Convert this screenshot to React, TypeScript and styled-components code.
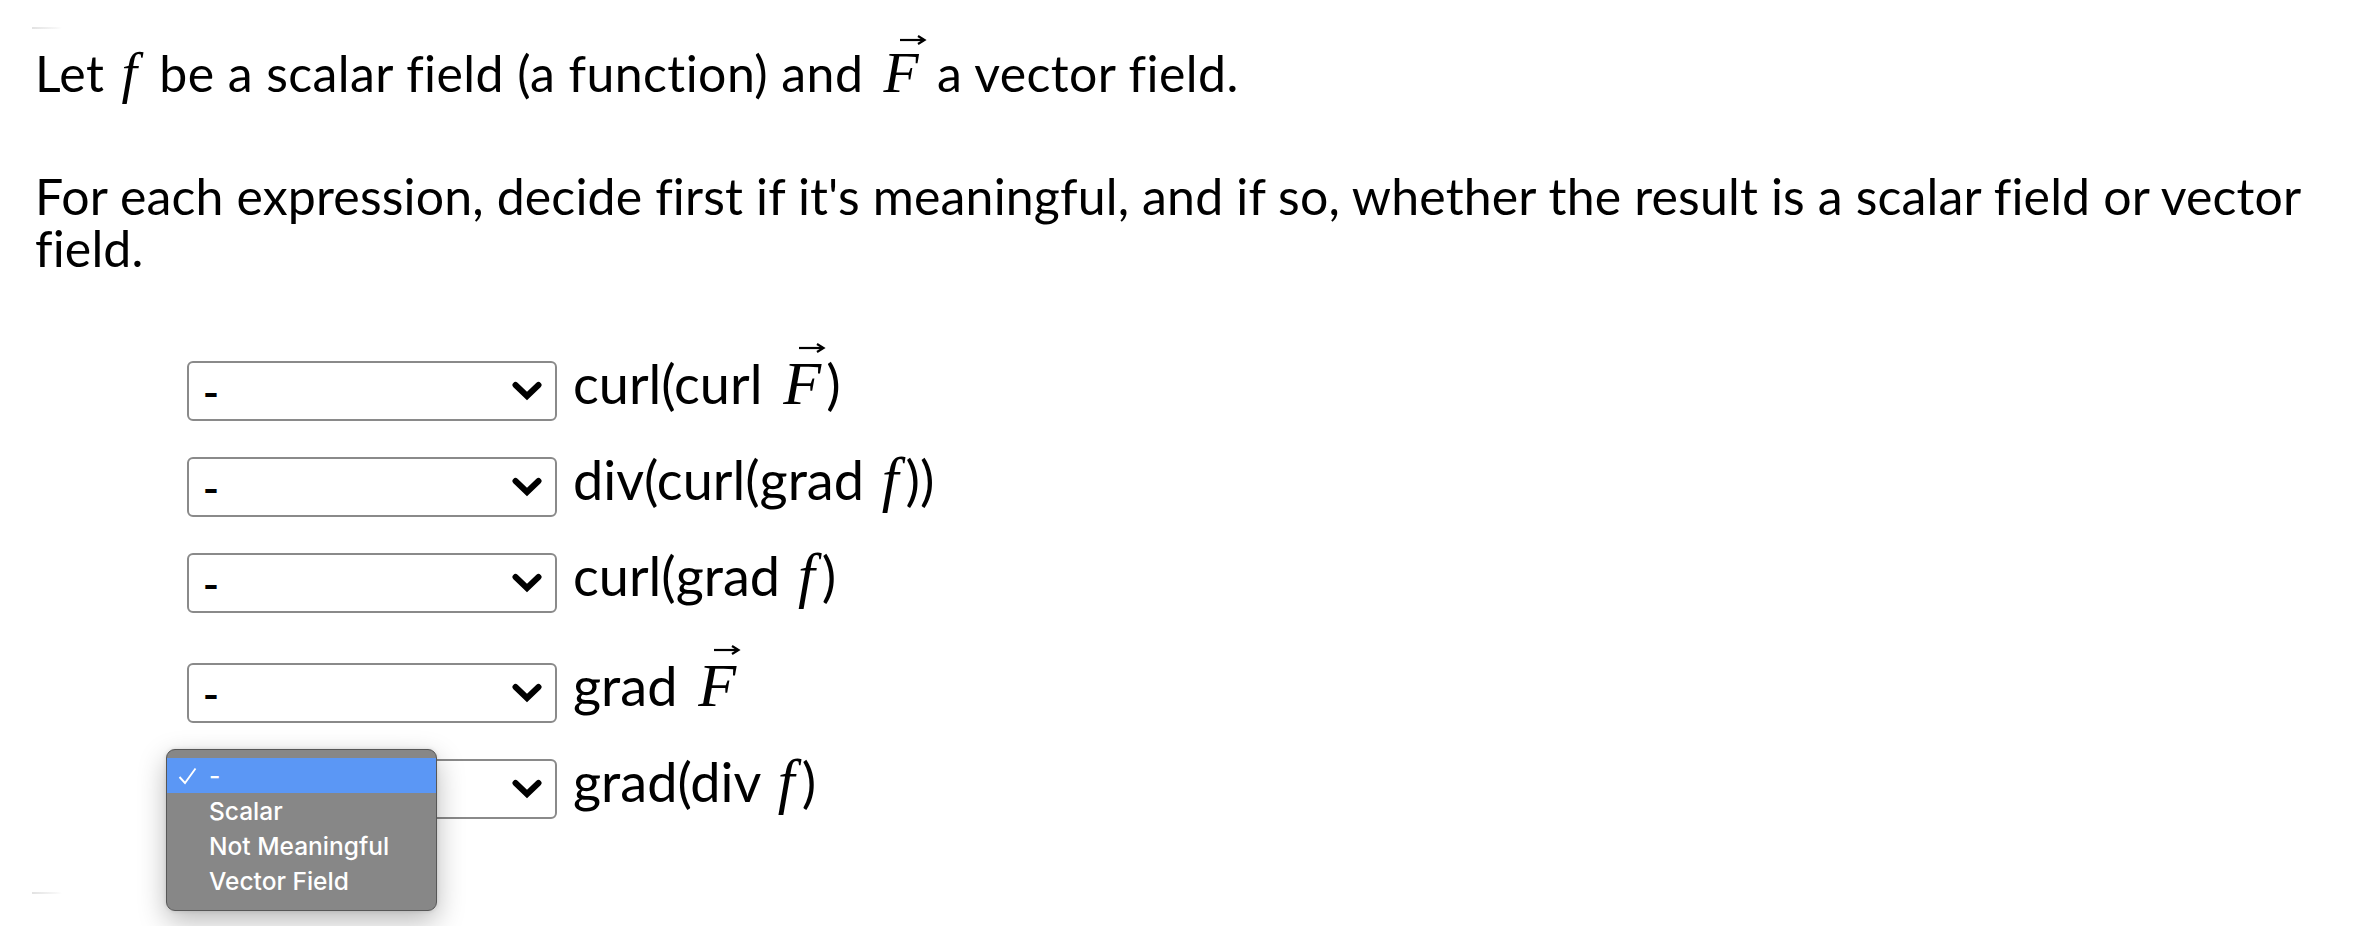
import React from 'react';
import styled, { createGlobalStyle } from 'styled-components';

const TEXT_FONT = `Lato, "Open Sans", "Noto Sans", sans-serif`;
const TEXT_SIZE = 50;
const EXPR_SIZE = 54;

const Global = createGlobalStyle`
  html, body { margin: 0; padding: 0; background: #ffffff; }
  body {
    font-family: ${TEXT_FONT};
    color: #000;
    font-variant-ligatures: none;
    font-feature-settings: "liga" 0, "clig" 0;
  }
`;

const Page = styled.main`
  width: 2362px;
  height: 926px;
  box-sizing: border-box;
  padding: 27px 0 0 35px;
  overflow: hidden;
  display: flex;
  flex-direction: column;
`;

const FaintRule = styled.div<{ $mt?: number }>`
  width: 30px;
  height: 2px;
  margin-left: -3px;
  margin-top: ${(p) => p.$mt ?? 0}px;
  background: linear-gradient(90deg, #e2e2e2, #f7f7f7 80%, #ffffff);
  flex: none;
`;

const Para = styled.p<{ $mt: number; $ls?: number }>`
  margin: ${(p) => p.$mt}px 0 0 0;
  font-size: ${TEXT_SIZE}px;
  line-height: 52px;
  letter-spacing: ${(p) => p.$ls ?? 0.15}px;
  max-width: 2310px;
`;

const MathI = styled.span<{ $pr?: number }>`
  font-family: "Liberation Serif", "Times New Roman", serif;
  font-style: italic;
  font-size: 1.12em;
  line-height: 0;
  letter-spacing: 0;
  padding: 0 ${(p) => p.$pr ?? 7}px 0 4px;
`;

const VecWrap = styled.span`
  position: relative;
  font-family: "Liberation Serif", "Times New Roman", serif;
  font-style: italic;
  font-size: 1.15em;
  line-height: 0;
  letter-spacing: 0;
  padding: 0 5px 0 7px;
`;

const VecArrow = styled.svg`
  position: absolute;
  left: 22px;
  top: -6px;
  width: 27px;
  height: 10px;
  overflow: visible;
`;

const Vec: React.FC<{ sym: string }> = ({ sym }) => (
  <VecWrap>
    {sym}
    <VecArrow viewBox="0 0 27 10">
      <path d="M1 5 H24" stroke="#000" strokeWidth="2.2" fill="none" />
      <path d="M19 1 L25.5 5 L19 9" stroke="#000" strokeWidth="2.2" fill="none" strokeLinejoin="miter" />
    </VecArrow>
  </VecWrap>
);

const Rows = styled.div`
  margin-top: 87px;
  padding-left: 152px;
  display: flex;
  flex-direction: column;
`;

const Row = styled.div<{ $mt: number }>`
  display: flex;
  align-items: flex-start;
  gap: 16px;
  margin-top: ${(p) => p.$mt}px;
  height: 60px;
`;

const SelectWrap = styled.div`
  position: relative;
  flex: none;
`;

const SelectBox = styled.div`
  box-sizing: border-box;
  width: 370px;
  height: 60px;
  border: 2px solid #8a8a8a;
  border-radius: 6px;
  background: #fff;
  display: flex;
  align-items: center;
  justify-content: space-between;
  padding: 0 13px 0 14px;
  font-family: Inter, "Liberation Sans", sans-serif;
  font-size: 34px;
  font-weight: 700;
`;

const SelectValue = styled.span`
  line-height: 1;
  margin-top: 4px;
`;

const Chevron = styled.svg`
  width: 30px;
  height: 20px;
  flex: none;
`;

const Expr = styled.div`
  font-size: ${EXPR_SIZE}px;
  line-height: 46px;
  white-space: nowrap;
`;

const Popup = styled.div`
  position: absolute;
  left: -21px;
  top: -10px;
  width: 271px;
  box-sizing: border-box;
  padding: 8px 0 12px;
  background: #878787;
  border: 1px solid #575757;
  border-radius: 9px;
  box-shadow: 0 10px 28px rgba(0, 0, 0, 0.28), 0 0 4px rgba(0, 0, 0, 0.12);
  font-family: Inter, "Liberation Sans", sans-serif;
  font-size: 24.5px;
  font-weight: 500;
  color: #fff;
  z-index: 5;
`;

const Option = styled.div<{ $active?: boolean }>`
  height: 35px;
  display: grid;
  grid-template-columns: 42px auto;
  align-items: center;
  background: ${(p) => (p.$active ? '#5b97f5' : 'transparent')};
`;

const Check = styled.svg`
  width: 19px;
  height: 18px;
  margin-left: 11px;
`;

const ChevronIcon = () => (
  <Chevron viewBox="0 0 30 20">
    <path d="M3.5 4 L15 15 L26.5 4" stroke="#000" strokeWidth="6" fill="none" strokeLinecap="round" strokeLinejoin="miter" />
  </Chevron>
);

type Item = { expr: React.ReactNode; mt: number; open?: boolean };

const items: Item[] = [
  { expr: <>curl(curl <Vec sym="F" />)</>, mt: 0 },
  { expr: <>div(curl(grad <MathI>f</MathI>))</>, mt: 36 },
  { expr: <>curl(grad <MathI>f</MathI>)</>, mt: 36 },
  { expr: <>grad <Vec sym="F" /></>, mt: 50 },
  { expr: <>grad(div <MathI>f</MathI>)</>, mt: 36, open: true },
];

const options = ['-', 'Scalar', 'Not Meaningful', 'Vector Field'];

export default function App() {
  return (
    <>
      <Global />
      <Page>
        <FaintRule />
        <Para $mt={18} $ls={0.42}>
          Let <MathI $pr={9}>f</MathI> be a scalar field (a function) and <Vec sym="F" /> a vector field.
        </Para>
        <Para $mt={71}>
          For each expression, decide first if it's meaningful, and if so, whether the result is a scalar field or vector field.
        </Para>
        <Rows>
          {items.map((it, i) => (
            <Row key={i} $mt={it.mt}>
              <SelectWrap>
                <SelectBox>
                  <SelectValue>-</SelectValue>
                  <ChevronIcon />
                </SelectBox>
                {it.open && (
                  <Popup>
                    {options.map((o, j) => (
                      <Option key={o} $active={j === 0}>
                        {j === 0 ? (
                          <Check viewBox="0 0 19 18">
                            <path d="M1.5 10 L7 16 L17.5 1.5" stroke="#fff" strokeWidth="1.9" fill="none" />
                          </Check>
                        ) : (
                          <span />
                        )}
                        <span>{o}</span>
                      </Option>
                    ))}
                  </Popup>
                )}
              </SelectWrap>
              <Expr>{it.expr}</Expr>
            </Row>
          ))}
        </Rows>
        <FaintRule $mt={73} />
      </Page>
    </>
  );
}
